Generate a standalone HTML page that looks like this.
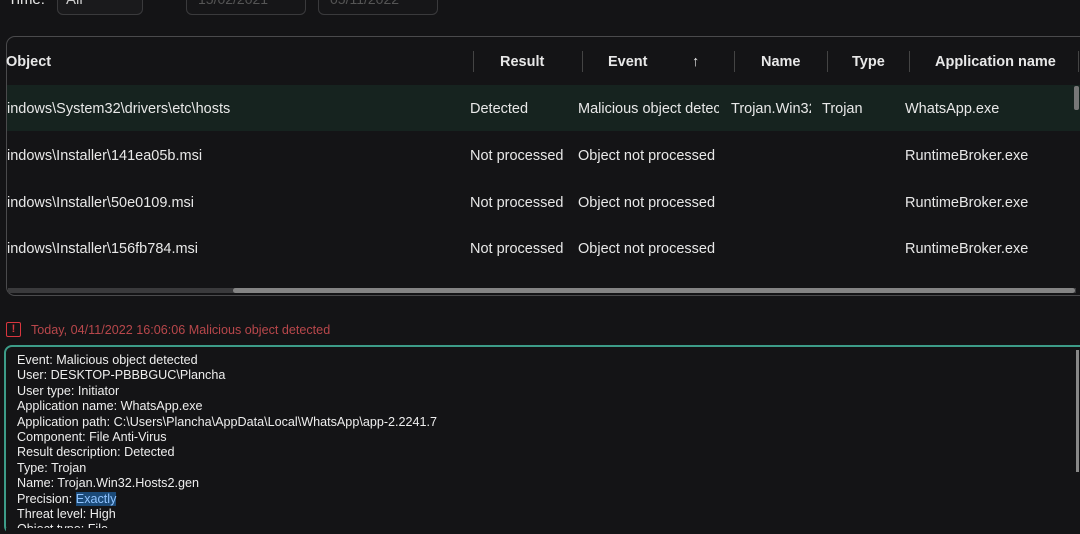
<!DOCTYPE html>
<html style="overflow:hidden;width:1080px;height:534px"><head><style>
body{margin:0;width:1080px;height:534px;background:#141416;overflow:hidden;font-family:"Segoe UI","Liberation Sans",sans-serif;color:#e8e8e8;position:relative}
.a{position:absolute;white-space:nowrap}
.box{position:absolute;border:1px solid #3a3a3c;border-radius:6px;background:#1a1a1c}
.hd{font-size:14.5px;font-weight:bold;top:54px}
.sep{position:absolute;top:51px;width:1px;height:21px;background:#444}
.c{font-size:14.5px}
.det{position:absolute;left:17px;top:353px;font-size:12.6px;line-height:15.4px;color:#eee}
</style></head><body>
<div class="a" style="left:8px;top:-9px;font-size:15px">Time:</div>
<div class="box" style="left:57px;top:-10px;width:84px;height:23px"></div>
<div class="a" style="left:66px;top:-9px;font-size:15px;color:#ccc">All</div>
<div class="box" style="left:186px;top:-10px;width:118px;height:23px;background:#161618"></div>
<div class="a" style="left:198px;top:-9px;font-size:14px;color:#555">15/02/2021</div>
<div class="box" style="left:318px;top:-10px;width:118px;height:23px;background:#161618"></div>
<div class="a" style="left:330px;top:-9px;font-size:14px;color:#555">05/11/2022</div>

<div style="position:absolute;left:6px;top:36px;width:1090px;height:258px;border:1.5px solid #4a4a4c;border-radius:9px;background:#141416"></div>
<div class="a hd" style="left:6px">Object</div>
<div class="sep" style="left:473px"></div>
<div class="a hd" style="left:500px">Result</div>
<div class="sep" style="left:582px"></div>
<div class="a hd" style="left:608px">Event</div>
<div class="a hd" style="left:692px">↑</div>
<div class="sep" style="left:734px"></div>
<div class="a hd" style="left:761px">Name</div>
<div class="sep" style="left:827px"></div>
<div class="a hd" style="left:852px">Type</div>
<div class="sep" style="left:909px"></div>
<div class="a hd" style="left:935px">Application name</div>
<div class="sep" style="left:1078px"></div>

<div style="position:absolute;left:7px;top:85px;width:1073px;height:46px;background:#16231f"></div>
<div style="position:absolute;left:1074px;top:86px;width:5px;height:24px;background:#777;border-radius:2px"></div>

<div class="a c" style="left:7px;top:101px">indows\System32\drivers\etc\hosts</div>
<div class="a c" style="left:470px;top:101px">Detected</div>
<div class="a c" style="left:578px;top:101px;width:141px;overflow:hidden">Malicious object detected</div>
<div class="a c" style="left:731px;top:101px;width:80px;overflow:hidden">Trojan.Win32</div>
<div class="a c" style="left:822px;top:101px">Trojan</div>
<div class="a c" style="left:905px;top:101px">WhatsApp.exe</div>

<div class="a c" style="left:7px;top:148px">indows\Installer\141ea05b.msi</div>
<div class="a c" style="left:470px;top:148px">Not processed</div>
<div class="a c" style="left:578px;top:148px">Object not processed</div>
<div class="a c" style="left:905px;top:148px">RuntimeBroker.exe</div>

<div class="a c" style="left:7px;top:195px">indows\Installer\50e0109.msi</div>
<div class="a c" style="left:470px;top:195px">Not processed</div>
<div class="a c" style="left:578px;top:195px">Object not processed</div>
<div class="a c" style="left:905px;top:195px">RuntimeBroker.exe</div>

<div class="a c" style="left:7px;top:241px">indows\Installer\156fb784.msi</div>
<div class="a c" style="left:470px;top:241px">Not processed</div>
<div class="a c" style="left:578px;top:241px">Object not processed</div>
<div class="a c" style="left:905px;top:241px">RuntimeBroker.exe</div>

<div style="position:absolute;left:8px;top:288px;width:1068px;height:5px;background:#3a3a3c"></div>
<div style="position:absolute;left:233px;top:288px;width:842px;height:5px;background:#848484;border-radius:3px"></div>

<div style="position:absolute;left:6px;top:322px;width:15px;height:15px;border:1.5px solid #d9363e;border-radius:2px;box-sizing:border-box;color:#d9363e;font-size:11px;font-weight:bold;text-align:center;line-height:12px">!</div>
<div class="a" style="left:31px;top:323px;font-size:12.6px;color:#b8474b">Today, 04/11/2022 16:06:06 Malicious object detected</div>

<div style="position:absolute;left:4px;top:345px;width:1090px;height:185px;border:2px solid #3d9c88;border-radius:8px;background:#141416"></div>
<div style="position:absolute;left:1076px;top:350px;width:3px;height:122px;background:#888"></div>
<div class="det">Event: Malicious object detected<br>User: DESKTOP-PBBBGUC\Plancha<br>User type: Initiator<br>Application name: WhatsApp.exe<br>Application path: C:\Users\Plancha\AppData\Local\WhatsApp\app-2.2241.7<br>Component: File Anti-Virus<br>Result description: Detected<br>Type: Trojan<br>Name: Trojan.Win32.Hosts2.gen<br>Precision: <span style="background:#1b4a78;color:#8fc3ff">Exactly</span><br>Threat level: High<br>Object type: File</div>
<div style="position:absolute;left:6px;top:528px;width:1074px;height:6px;background:#141416"></div>
</body></html>
